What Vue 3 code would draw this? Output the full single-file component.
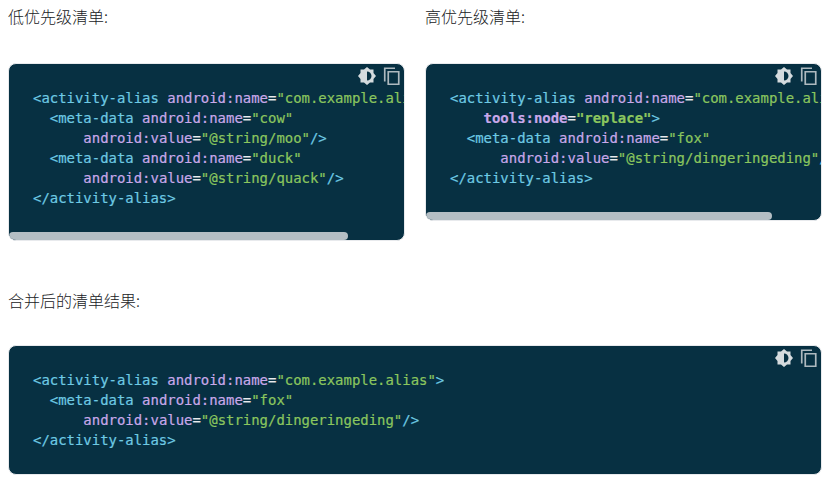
<script setup>
const t = (s) => ({ c: 'tag', s })
const a = (s) => ({ c: 'attr', s })
const v = (s) => ({ c: 'str', s })
const p = (s) => ({ c: 'plain', s })
const A = (s) => ({ c: 'attr bold', s })
const V = (s) => ({ c: 'str bold', s })

const nameLine = (val, close) => [t('<activity-alias '), a('android:name'), p('='), v(`"${val}"`), ...(close ? [t('>')] : [])]
const meta = (val) => [t('  <meta-data '), a('android:name'), p('='), v(`"${val}"`)]
const value = (val) => [p('      '), a('android:value'), p('='), v(`"${val}"`), t('/>')]
const end = [t('</activity-alias>')]

const blocks = [
  {
    title: '低优先级清单:',
    thumb: 339,
    lines: [nameLine('com.example.alias', true), meta('cow'), value('@string/moo'), meta('duck'), value('@string/quack'), end]
  },
  {
    title: '高优先级清单:',
    thumb: 346,
    lines: [
      nameLine('com.example.alias'),
      [p('    '), A('tools:node'), p('='), V('"replace"'), t('>')],
      meta('fox'),
      value('@string/dingeringeding'),
      end
    ]
  },
  {
    title: '合并后的清单结果:',
    thumb: 0,
    wide: true,
    lines: [nameLine('com.example.alias', true), meta('fox'), value('@string/dingeringeding'), end]
  }
]
</script>

<template>
  <main class="page">
    <section v-for="b in blocks" :key="b.title" class="block" :class="{ wide: b.wide }">
      <p class="title">{{ b.title }}</p>
      <div class="card">
        <div class="tools">
          <svg class="icon" viewBox="0 0 18 18" width="18" height="18">
            <path fill="#d5dbde" fill-rule="evenodd" d="M6 2.500 9 0l3 2.500h3.500V6L18 9l-2.500 3v3.500H12L9 18l-3-2.500H2.500V12L0 9l2.500-3V2.500zM9 4.500v9c2.500 0 4.500-2 4.500-4.500S11.500 4.500 9 4.500z" />
          </svg>
          <svg class="icon copy" viewBox="0 0 18 18" width="18" height="18">
            <path fill="none" stroke="#aeb9bf" stroke-width="1.700" d="M1.750 14.500V1.250H12M5.250 4.750h10.500v12.500H5.250z" />
          </svg>
        </div>
        <pre class="code"><code><span v-for="(line, i) in b.lines" :key="i" class="line"><span v-for="(part, j) in line" :key="j" :class="part.c">{{ part.s }}</span></span></code></pre>
        <div v-if="b.thumb" class="track"><div class="thumb" :style="{ width: b.thumb + 'px' }"></div></div>
      </div>
    </section>
  </main>
</template>

<style scoped>
.page {
  display: grid;
  grid-template-columns: 397px 397px;
  column-gap: 20px;
  padding: 4px 0 0 8px;
  font-family: "Noto Sans CJK SC", sans-serif;
}
.block.wide {
  grid-column: 1 / 3;
  margin-top: 47px;
}
.title {
  margin: 0 0 35px;
  font-size: 16px;
  line-height: 24px;
  font-weight: 300;
  color: #202124;
}
.wide .title {
  margin-bottom: 33px;
}
.card {
  background: #073042;
  border: 1px solid #e8eaed;
  border-radius: 8px;
  overflow: hidden;
}
.tools {
  display: flex;
  justify-content: flex-end;
  gap: 7px;
  height: 24px;
  padding: 3px 3px 0 0;
  box-sizing: border-box;
}
.code {
  margin: 0;
  padding: 0 0 0 24px;
  overflow: hidden;
  font-family: "DejaVu Sans Mono", monospace;
  font-size: 13.95px;
  line-height: 20px;
  -webkit-text-stroke: 0.2px;
}
.code code {
  font: inherit;
}
.line {
  display: block;
  white-space: pre;
}
.tag { color: #6ecae4; }
.attr { color: #c9a8ea; }
.str { color: #8bc65e; }
.plain { color: #e8eaed; }
.bold { font-weight: 700; }
.track {
  height: 8px;
  margin-top: 24px;
}
.thumb {
  height: 8px;
  background: #b4bec4;
  border-radius: 4px;
}
.wide .code {
  padding-bottom: 24px;
}
</style>
